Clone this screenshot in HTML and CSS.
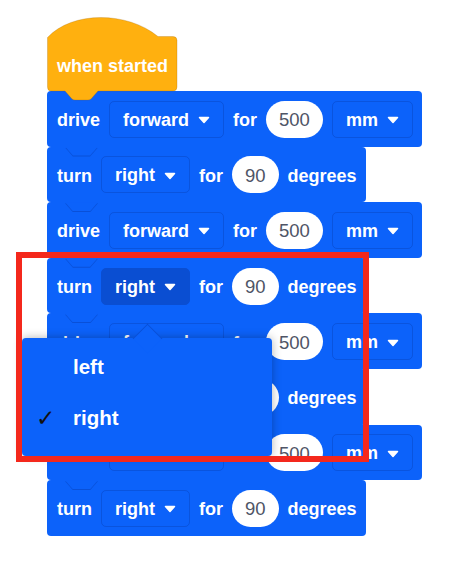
FILE: index.html
```html
<!DOCTYPE html>
<html>
<head>
    <title>Blocks</title>
    <link rel="stylesheet" href="styles.css">
</head>
<body>
    <!-- block stack -->
    <div class="script">
        <div class="hat">
            <svg class="hat-shape" width="131" height="85" viewBox="0 0 131 85">
                <path d="M0.5 20.5 C25 -6 80 -6 111 19.5 L126 19.5 Q130 19.5 130 23.5 L130 70 Q130 74 126 74 L51 74 L44 82 Q43 83 41 83 L28 83 Q26 83 25 82 L18 74 L4 74 Q0.5 74 0.5 70 Z"/>
            </svg>
            <span class="label">when started</span>
        </div>

        <div class="block">
            <span class="label">drive</span>
            <span class="field">forward<svg class="caret" viewBox="0 0 12 8"><path d="M1.5 1.5 L10.5 1.5 L6 6.5 Z"/></svg></span>
            <span class="label">for</span>
            <span class="num">500</span>
            <span class="field">mm<svg class="caret" viewBox="0 0 12 8"><path d="M1.5 1.5 L10.5 1.5 L6 6.5 Z"/></svg></span>
        </div>
        <div class="block">
            <span class="label">turn</span>
            <span class="field">right<svg class="caret" viewBox="0 0 12 8"><path d="M1.5 1.5 L10.5 1.5 L6 6.5 Z"/></svg></span>
            <span class="label">for</span>
            <span class="num">90</span>
            <span class="label">degrees</span>
        </div>
        <div class="block">
            <span class="label">drive</span>
            <span class="field">forward<svg class="caret" viewBox="0 0 12 8"><path d="M1.5 1.5 L10.5 1.5 L6 6.5 Z"/></svg></span>
            <span class="label">for</span>
            <span class="num">500</span>
            <span class="field">mm<svg class="caret" viewBox="0 0 12 8"><path d="M1.5 1.5 L10.5 1.5 L6 6.5 Z"/></svg></span>
        </div>
        <div class="block">
            <span class="label">turn</span>
            <span class="field open">right<svg class="caret" viewBox="0 0 12 8"><path d="M1.5 1.5 L10.5 1.5 L6 6.5 Z"/></svg></span>
            <span class="label">for</span>
            <span class="num">90</span>
            <span class="label">degrees</span>
        </div>
        <div class="block">
            <span class="label">drive</span>
            <span class="field">forward<svg class="caret" viewBox="0 0 12 8"><path d="M1.5 1.5 L10.5 1.5 L6 6.5 Z"/></svg></span>
            <span class="label">for</span>
            <span class="num">500</span>
            <span class="field">mm<svg class="caret" viewBox="0 0 12 8"><path d="M1.5 1.5 L10.5 1.5 L6 6.5 Z"/></svg></span>
        </div>
        <div class="block">
            <span class="label">turn</span>
            <span class="field">right<svg class="caret" viewBox="0 0 12 8"><path d="M1.5 1.5 L10.5 1.5 L6 6.5 Z"/></svg></span>
            <span class="label">for</span>
            <span class="num">90</span>
            <span class="label">degrees</span>
        </div>
        <div class="block">
            <span class="label">drive</span>
            <span class="field">forward<svg class="caret" viewBox="0 0 12 8"><path d="M1.5 1.5 L10.5 1.5 L6 6.5 Z"/></svg></span>
            <span class="label">for</span>
            <span class="num">500</span>
            <span class="field">mm<svg class="caret" viewBox="0 0 12 8"><path d="M1.5 1.5 L10.5 1.5 L6 6.5 Z"/></svg></span>
        </div>
        <div class="block">
            <span class="label">turn</span>
            <span class="field">right<svg class="caret" viewBox="0 0 12 8"><path d="M1.5 1.5 L10.5 1.5 L6 6.5 Z"/></svg></span>
            <span class="label">for</span>
            <span class="num">90</span>
            <span class="label">degrees</span>
        </div>
    </div>

    <!-- dropdown for the open field -->
    <div class="menu">
        <div class="menu-item"><span class="check"></span>left</div>
        <div class="menu-item"><span class="check">&#10003;</span>right</div>
    </div>

    <div class="highlight"></div>
</body>
</html>
```

FILE: styles.css
```css
body {
    margin: 0;
    background-color: #ffffff;
    font-family: "Liberation Sans", Arial, sans-serif;
    font-weight: bold;
    font-size: 18px;
    color: #ffffff;
}

.script {
    display: flex;
    flex-direction: column;
    align-items: flex-start;
    padding: 17px 0 0 47px;
}

/* hat block */
.hat {
    position: relative;
    z-index: 20;
    width: 130px;
    height: 74px;
    display: flex;
    align-items: flex-end;
    box-sizing: border-box;
    padding: 0 0 14px 10px;
}
.hat-shape {
    position: absolute;
    left: 0;
    top: 0;
    overflow: visible;
}
.hat-shape path {
    fill: #ffb00f;
    stroke: rgba(150, 90, 0, 0.25);
    stroke-width: 1;
}
.hat .label {
    position: relative;
}

/* stack blocks */
.block {
    position: relative;
    display: flex;
    align-items: center;
    gap: 9px;
    height: 55.6px;
    box-sizing: border-box;
    padding: 1px 9px 0 10px;
    background-color: #0c62fa;
    border-radius: 4px;
}
.block::before,
.block::after {
    content: "";
    position: absolute;
    left: 18px;
    top: 100%;
    width: 33px;
    height: 9px;
    clip-path: polygon(0 0, 100% 0, 76% 100%, 24% 100%);
}
.block::before {
    top: calc(100% + 1px);
    background-color: rgba(0, 0, 60, 0.18);
}
.block::after {
    background-color: #0c62fa;
}
.block:nth-child(2) { z-index: 19; }
.block:nth-child(3) { z-index: 18; }
.block:nth-child(4) { z-index: 17; }
.block:nth-child(5) { z-index: 16; }
.block:nth-child(6) { z-index: 15; }
.block:nth-child(7) { z-index: 14; }
.block:nth-child(8) { z-index: 13; }
.block:nth-child(9) { z-index: 12; }

.label {
    white-space: nowrap;
}
.block .label {
    padding-top: 3px;
}

.field {
    display: flex;
    align-items: center;
    height: 37px;
    box-sizing: border-box;
    padding: 2px 13px 0 13px;
    border: 1px solid rgba(0, 0, 60, 0.14);
    border-radius: 5px;
}
.field.open {
    background-color: #0a4ed2;
    border-color: #0a4ed2;
}
.caret {
    width: 12px;
    height: 8px;
    margin-left: 9px;
}
.caret path {
    fill: #ffffff;
    stroke: #ffffff;
    stroke-width: 1.5;
    stroke-linejoin: round;
}

.num {
    display: flex;
    align-items: center;
    height: 37px;
    box-sizing: border-box;
    padding: 2px 13px 0;
    border-radius: 19px;
    background-color: #ffffff;
    color: #4f5566;
    font-weight: normal;
    font-size: 18.5px;
}

/* dropdown menu */
.menu {
    position: absolute;
    z-index: 30;
    left: 22px;
    top: 338px;
    width: 250px;
    height: 118px;
    box-sizing: border-box;
    padding-top: 3px;
    background-color: #0c62fa;
    border-radius: 4px;
    box-shadow: 0 0 10px rgba(0, 0, 0, 0.3);
    font-size: 20.5px;
}
.menu::before {
    content: "";
    position: absolute;
    left: 115px;
    top: -10px;
    width: 20px;
    height: 20px;
    background-color: #0c62fa;
    border-top: 1px solid rgba(0, 0, 60, 0.18);
    border-left: 1px solid rgba(0, 0, 60, 0.18);
    transform: rotate(45deg);
}
.menu-item {
    position: relative;
    display: flex;
    align-items: center;
    height: 51px;
}
.check {
    width: 51px;
    box-sizing: border-box;
    padding-left: 14px;
    color: #111111;
    font-family: "DejaVu Sans", sans-serif;
    font-weight: normal;
    font-size: 23px;
}

/* annotation box */
.highlight {
    position: absolute;
    z-index: 40;
    left: 16px;
    top: 252px;
    width: 353px;
    height: 210px;
    box-sizing: border-box;
    border: 6px solid #f4281c;
}
```
